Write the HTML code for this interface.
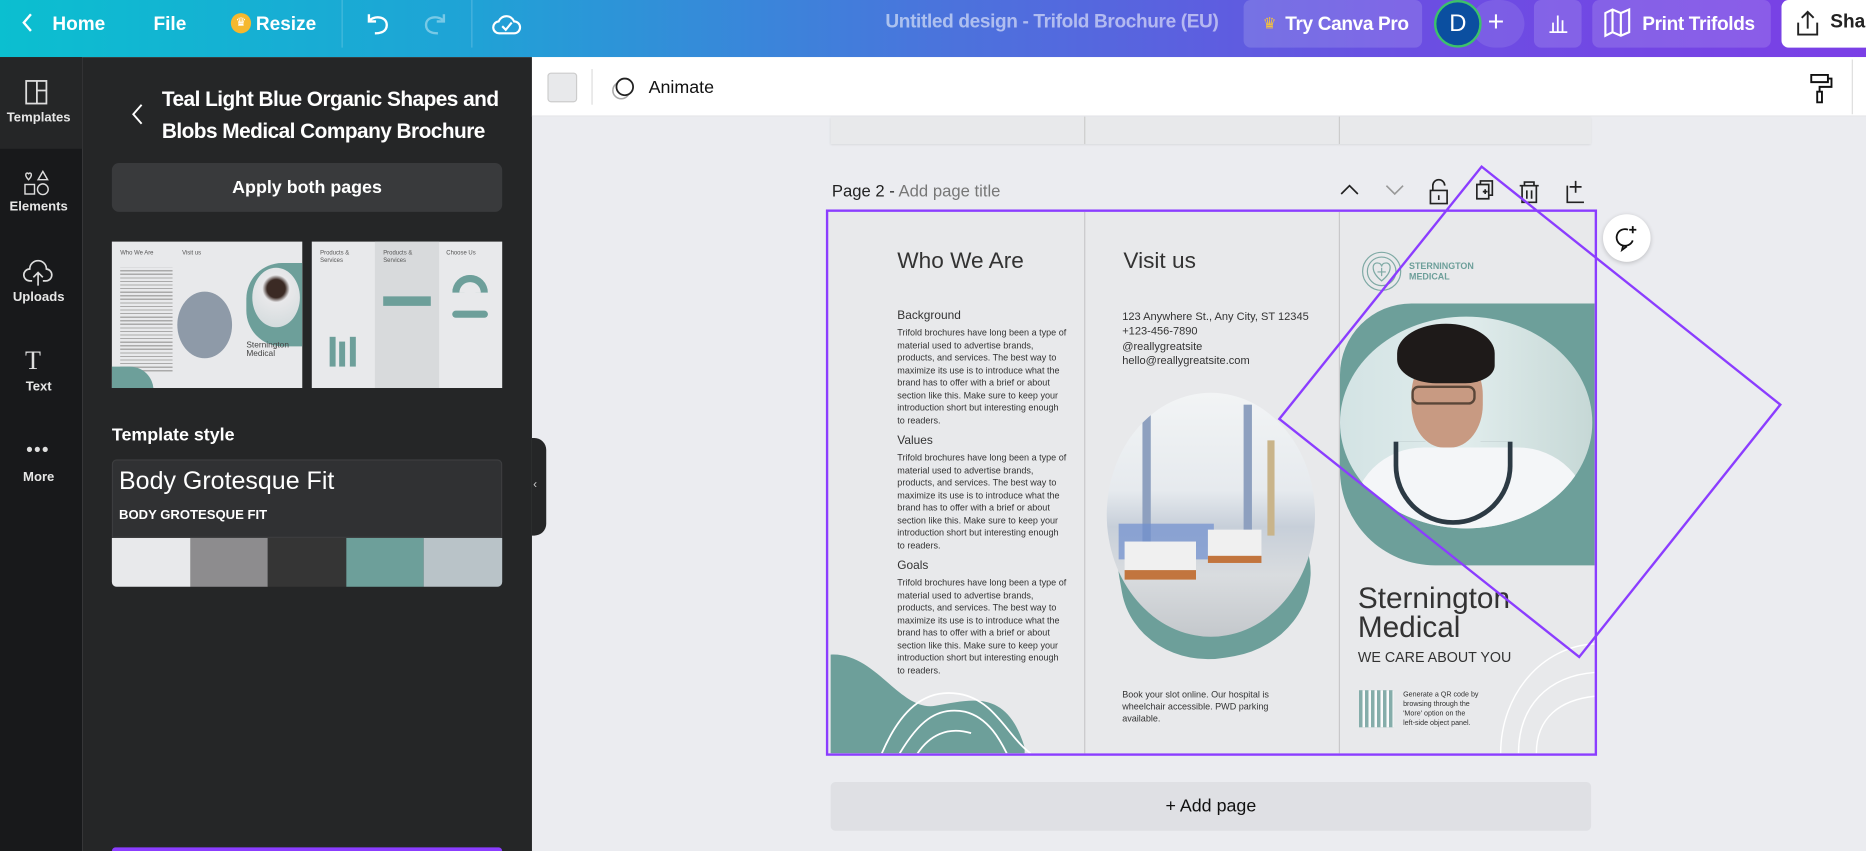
<!DOCTYPE html>
<html><head><meta charset="utf-8"><style>
*{margin:0;padding:0;box-sizing:border-box}
html,body{width:1866px;height:851px;overflow:hidden;background:#ebecf0;font-family:"Liberation Sans",sans-serif}
#w{position:absolute;left:0;top:0;width:1568px;height:715px;transform:scale(1.19005,1.1902);transform-origin:0 0;overflow:hidden;background:#ebecf0}
.a{position:absolute}
.top{left:0;top:0;width:1568px;height:48px;background:linear-gradient(90deg,#0bbfd0 0%,#1fa3d6 25%,#4a74dc 50%,#6a4fe2 75%,#7b3fe6 100%)}
.tt{color:#fff;font-size:16px;font-weight:bold;top:12px}
.pill{background:rgba(255,255,255,.14);border-radius:6px;height:40px;top:0}
.rail{left:0;top:48px;width:69px;height:667px;background:#18191b}
.ri{color:#e6e6e6;font-size:11px;font-weight:bold;width:69px;text-align:center}
.panel{left:69px;top:48px;width:378px;height:667px;background:#252627}
.body{font-size:7.6px;line-height:10.5px;color:#333;font-family:"Liberation Sans",sans-serif}
.h{font-size:10px;color:#333}
</style></head><body><div id="w">
<div class="a top"></div>
<svg class="a" style="left:16px;top:10px" width="14" height="18"><path d="M10 2 L4 9 L10 16" stroke="#fff" stroke-width="2" fill="none"/></svg>
<div class="a tt" style="left:44px">Home</div>
<div class="a tt" style="left:129px">File</div>
<div class="a" style="left:194px;top:11px;width:17px;height:17px;border-radius:50%;background:#f5b82e;color:#fff;font-size:10px;text-align:center;line-height:17px">♛</div>
<div class="a tt" style="left:215px">Resize</div>
<div class="a" style="left:287px;top:0;width:1px;height:40px;background:rgba(255,255,255,.2)"></div>
<svg class="a" style="left:305px;top:8px" width="24" height="24"><path d="M5 4 V10 H11 M5 10 C8 5 20 5 20 13 C20 19 14 20 10 20" stroke="#fff" stroke-width="2" fill="none"/></svg>
<svg class="a" style="left:354px;top:8px" width="24" height="24" opacity=".4"><path d="M19 4 V10 H13 M19 10 C16 5 4 5 4 13 C4 19 10 20 14 20" stroke="#fff" stroke-width="2" fill="none"/></svg>
<div class="a" style="left:396px;top:0;width:1px;height:40px;background:rgba(255,255,255,.2)"></div>
<svg class="a" style="left:412px;top:6px" width="28" height="28"><path d="M8 22 H20 A5 5 0 0 0 20 12 A7 7 0 0 0 7 12 A5 5 0 0 0 8 22 Z M10 16 L13 19 L18 13" stroke="#fff" stroke-width="1.8" fill="none"/></svg>
<div class="a" style="left:744px;top:10px;font-size:16px;font-weight:bold;color:rgba(255,255,255,.55);letter-spacing:-0.3px">Untitled design - Trifold Brochure (EU)</div>
<div class="a pill" style="left:1045px;width:150px"></div>
<div class="a" style="left:1061px;top:12px;color:#f5c33b;font-size:13px">♛</div>
<div class="a tt" style="left:1080px;letter-spacing:-0.3px">Try Canva Pro</div>
<div class="a" style="left:1236px;top:0;width:45px;height:40px;border-radius:20px;background:rgba(255,255,255,.1)"></div>
<div class="a" style="left:1205px;top:0;width:40px;height:40px;border-radius:50%;background:#0b4fa0;border:2px solid #3cc26a;color:#fff;font-size:20px;text-align:center;line-height:36px">D</div>
<div class="a" style="left:1250px;top:5px;color:#fff;font-size:24px">+</div>
<div class="a pill" style="left:1289px;width:40px"></div>
<svg class="a" style="left:1297px;top:7px" width="24" height="24"><path d="M5 20 H20 M8 20 V12 M12 20 V6 M16 20 V10" stroke="#fff" stroke-width="1.5" fill="none"/></svg>
<div class="a pill" style="left:1338px;width:150px"></div>
<svg class="a" style="left:1346px;top:5px" width="26" height="28"><path d="M3 6 L9 3 L16 6 L23 3 V22 L16 25 L9 22 L3 25 Z M9 3 V22 M16 6 V25" stroke="#fff" stroke-width="1.8" fill="none"/></svg>
<div class="a tt" style="left:1380px;letter-spacing:-0.3px">Print Trifolds</div>
<div class="a" style="left:1497px;top:0;width:80px;height:40px;background:#fff;border-radius:6px"></div>
<svg class="a" style="left:1507px;top:7px" width="24" height="26"><path d="M4 12 V22 H20 V12 M12 17 V3 M7 8 L12 3 L17 8" stroke="#222" stroke-width="1.6" fill="none"/></svg>
<div class="a" style="left:1538px;top:10px;font-size:16px;font-weight:bold;color:#222">Sha</div>

<div class="a rail"></div>
<div class="a" style="left:0;top:48px;width:69px;height:77px;background:#252627"></div>
<svg class="a" style="left:21px;top:67px" width="20" height="22"><rect x="1" y="1" width="17" height="19" fill="none" stroke="#ddd" stroke-width="1.5"/><path d="M10 1 V20 M10 9 H18" stroke="#ddd" stroke-width="1.5"/></svg>
<div class="a ri" style="left:-2px;top:93px">Templates</div>
<svg class="a" style="left:20px;top:142px" width="24" height="24"><path d="M4 4 C2 2 0 5 4 9 C8 5 6 2 4 4Z M16 2 L20 9 H12 Z" stroke="#ddd" stroke-width="1.2" fill="none"/><rect x="1" y="13" width="8" height="8" fill="none" stroke="#ddd" stroke-width="1.2"/><circle cx="16" cy="17" r="4.5" fill="none" stroke="#ddd" stroke-width="1.2"/></svg>
<div class="a ri" style="left:-2px;top:168px">Elements</div>
<svg class="a" style="left:19px;top:218px" width="26" height="24"><path d="M8 18 H6 A5 5 0 0 1 6 8 A7 7 0 0 1 20 8 A5 5 0 0 1 19 18 H17 M13 22 V11 M9 15 L13 11 L17 15" stroke="#ddd" stroke-width="1.4" fill="none"/></svg>
<div class="a ri" style="left:-2px;top:244px">Uploads</div>
<div class="a" style="left:21px;top:290px;color:#ddd;font-size:22px;font-family:'Liberation Serif',serif">T</div>
<div class="a ri" style="left:-2px;top:319px">Text</div>
<div class="a" style="left:22px;top:370px;color:#ddd;font-size:16px;letter-spacing:1px">•••</div>
<div class="a ri" style="left:-2px;top:395px">More</div>

<div class="a panel"></div>
<svg class="a" style="left:108px;top:86px" width="14" height="20"><path d="M11 2 L4 10 L11 18" stroke="#fff" stroke-width="1.6" fill="none"/></svg>
<div class="a" style="left:136px;top:70px;color:#fff;font-size:17.5px;font-weight:bold;line-height:27px;letter-spacing:-0.45px">Teal Light Blue Organic Shapes and<br>Blobs Medical Company Brochure</div>
<div class="a" style="left:94px;top:137px;width:328px;height:41px;background:#393a3c;border-radius:6px;color:#fff;font-size:15px;font-weight:bold;text-align:center;line-height:41px">Apply both pages</div>
<div class="a" style="left:94px;top:203px;width:160px;height:123px;background:#e8e9eb;overflow:hidden">
 <div class="a" style="left:7px;top:7px;font-size:5px;color:#555">Who We Are</div><div class="a" style="left:59px;top:7px;font-size:5px;color:#555">Visit us</div>
 <div class="a" style="left:7px;top:22px;width:44px;height:88px;background:repeating-linear-gradient(#e8e9eb 0 2px,#aaa 2px 3px)"></div>
 <div class="a" style="left:113px;top:18px;width:47px;height:70px;background:#6d9f9a;border-radius:30px 0 0 30px"></div>
 <div class="a" style="left:118px;top:22px;width:40px;height:50px;border-radius:50%;background:radial-gradient(circle at 50% 35%,#3b2a24 0 20%,#e8e8ea 30%,#cfd8da)"></div>
 <div class="a" style="left:55px;top:42px;width:46px;height:56px;border-radius:50%;background:#8e9aa8"></div>
 <div class="a" style="left:113px;top:84px;font-size:7px;color:#444;line-height:7px">Sternington<br>Medical</div>
 <div class="a" style="left:0;top:105px;width:35px;height:20px;background:#6d9f9a;border-radius:0 20px 0 0"></div>
</div>
<div class="a" style="left:262px;top:203px;width:160px;height:123px;background:#e8e9eb;overflow:hidden">
 <div class="a" style="left:53px;top:0;width:54px;height:123px;background:#d8dadc"></div>
 <div class="a" style="left:7px;top:7px;font-size:5px;color:#555">Products &amp;<br>Services</div><div class="a" style="left:60px;top:7px;font-size:5px;color:#555">Products &amp;<br>Services</div><div class="a" style="left:113px;top:7px;font-size:5px;color:#555">Choose Us</div>
 <div class="a" style="left:60px;top:46px;width:40px;height:8px;background:#6d9f9a"></div>
 <div class="a" style="left:15px;top:80px;width:5px;height:25px;background:#6d9f9a"></div><div class="a" style="left:23px;top:84px;width:5px;height:21px;background:#6d9f9a"></div><div class="a" style="left:32px;top:80px;width:5px;height:25px;background:#6d9f9a"></div>
 <div class="a" style="left:118px;top:28px;width:30px;height:15px;border:6px solid #6d9f9a;border-bottom:none;border-radius:15px 15px 0 0"></div>
 <div class="a" style="left:118px;top:58px;width:30px;height:6px;background:#6d9f9a;border-radius:3px"></div>
</div>
<div class="a" style="left:94px;top:357px;color:#fff;font-size:15px;font-weight:bold">Template style</div>
<div class="a" style="left:94px;top:386px;width:328px;height:66px;background:#303133;border:1px solid #3c3d3f;border-radius:4px 4px 0 0"></div>
<div class="a" style="left:100px;top:393px;color:#fff;font-size:21px">Body Grotesque Fit</div>
<div class="a" style="left:100px;top:427px;color:#fff;font-size:11px;font-weight:bold">BODY GROTESQUE FIT</div>
<div class="a" style="left:94px;top:452px;width:66px;height:41px;background:#e8e9eb;border-radius:0 0 0 4px"></div>
<div class="a" style="left:160px;top:452px;width:65px;height:41px;background:#8d8c8e"></div>
<div class="a" style="left:225px;top:452px;width:66px;height:41px;background:#353535"></div>
<div class="a" style="left:291px;top:452px;width:65px;height:41px;background:#6d9f9a"></div>
<div class="a" style="left:356px;top:452px;width:66px;height:41px;background:#b9c3c8;border-radius:0 0 4px 0"></div>
<div class="a" style="left:94px;top:712px;width:328px;height:6px;background:#8b3dff;border-radius:4px"></div>
<div class="a" style="left:447px;top:368px;width:12px;height:82px;background:#252627;border-radius:0 10px 10px 0"></div>
<div class="a" style="left:448px;top:402px;color:#ccc;font-size:10px">‹</div>

<div class="a" style="left:447px;top:48px;width:1121px;height:50px;background:#fff;border-bottom:1px solid #e3e4e8"></div>
<div class="a" style="left:460px;top:61px;width:25px;height:25px;background:#e8e9eb;border:1px solid #ccc;border-radius:3px"></div>
<div class="a" style="left:497px;top:58px;width:1px;height:30px;background:#ddd"></div>
<svg class="a" style="left:512px;top:62px" width="24" height="24"><circle cx="10" cy="14" r="7" fill="none" stroke="#aaa" stroke-width="1.3"/><circle cx="13" cy="11" r="7" fill="#fff" stroke="#222" stroke-width="1.5"/></svg>
<div class="a" style="left:545px;top:65px;font-size:15px;color:#111">Animate</div>
<svg class="a" style="left:1518px;top:60px" width="24" height="28"><path d="M4 3 H18 V9 H4 Z M18 6 H21 V13 H11 V17 M9 17 H13 V26 H9 Z" stroke="#111" stroke-width="1.6" fill="none"/></svg>
<div class="a" style="left:1556px;top:50px;width:1px;height:46px;background:#ddd"></div>

<div class="a" style="left:698px;top:98px;width:639px;height:23px;background:#e8e9eb;box-shadow:0 1px 2px rgba(0,0,0,.1)"></div>
<div class="a" style="left:911px;top:98px;width:1px;height:23px;background:#ccc"></div>
<div class="a" style="left:1125px;top:98px;width:1px;height:23px;background:#ccc"></div>

<div class="a" style="left:699px;top:152px;font-size:14px;color:#222">Page 2 - <span style="color:#777">Add page title</span></div>
<svg class="a" style="left:1124px;top:150px" width="220" height="22" fill="none" stroke-width="1.4">
<path d="M3 13 L10 6 L17 13" stroke="#222"/><path d="M41 6 L48 13 L55 6" stroke="#999"/>
<path d="M80 10 V6 A5 5 0 0 1 90 6 M78 10 H92 V21 H78 Z M85 14 V18" stroke="#222"/>
<path d="M117 5 H127 V17 H117 Z M120 5 V2 H130 V14 H127 M122 11 H126 M124 9 V13" stroke="#222"/>
<path d="M153 6 H169 M157 6 V3 H165 V6 M155 6 V20 H167 V6 M159 10 V17 M163 10 V17" stroke="#222"/>
<path d="M193 6 V20 H207 M200 2 V12 M195 7 H205" stroke="#222"/>
</svg>

<div class="a" style="left:696px;top:178px;width:644px;height:455px;background:#e8e9eb;overflow:hidden">
 <div class="a" style="left:215px;top:0;width:1px;height:455px;background:#c8c8ca"></div>
 <div class="a" style="left:429px;top:0;width:1px;height:455px;background:#c8c8ca"></div>
 <div class="a" style="left:58px;top:31px;font-size:19px;color:#333">Who We Are</div>
 <div class="a h" style="left:58px;top:82px">Background</div>
 <div class="a body" style="left:58px;top:97px">Trifold brochures have long been a type of<br>material used to advertise brands,<br>products, and services. The best way to<br>maximize its use is to introduce what the<br>brand has to offer with a brief or about<br>section like this. Make sure to keep your<br>introduction short but interesting enough<br>to readers.</div>
 <div class="a h" style="left:58px;top:187px">Values</div>
 <div class="a body" style="left:58px;top:202px">Trifold brochures have long been a type of<br>material used to advertise brands,<br>products, and services. The best way to<br>maximize its use is to introduce what the<br>brand has to offer with a brief or about<br>section like this. Make sure to keep your<br>introduction short but interesting enough<br>to readers.</div>
 <div class="a h" style="left:58px;top:292px">Goals</div>
 <div class="a body" style="left:58px;top:307px">Trifold brochures have long been a type of<br>material used to advertise brands,<br>products, and services. The best way to<br>maximize its use is to introduce what the<br>brand has to offer with a brief or about<br>section like this. Make sure to keep your<br>introduction short but interesting enough<br>to readers.</div>
 <svg class="a" style="left:0;top:360px" width="215" height="95"><path d="M2 12 C40 10 60 60 90 55 C120 50 150 40 165 90 L165 95 H2 Z" fill="#6d9f9a"/><path d="M45 95 C60 60 80 40 110 45 C140 50 150 80 170 95 M60 95 C75 70 90 55 115 60 C135 65 145 85 150 95 M75 95 C85 80 100 72 120 78" stroke="#fff" stroke-width="1.5" fill="none"/></svg>
 <div class="a" style="left:248px;top:31px;font-size:19px;color:#333">Visit us</div>
 <div class="a" style="left:247px;top:82px;font-size:9.3px;line-height:12.3px;color:#333">123 Anywhere St., Any City, ST 12345<br>+123-456-7890<br>@reallygreatsite<br>hello@reallygreatsite.com</div>
 <div class="a" style="left:245px;top:230px;width:160px;height:145px;border-radius:45% 55% 50% 50%;background:#6d9f9a;transform:rotate(-10deg)"></div>
 <div class="a" style="left:234px;top:152px;width:175px;height:205px;border-radius:50%;overflow:hidden;background:linear-gradient(180deg,#f2f4f5 0%,#e6eaee 40%,#c7cfd9 55%,#d9dcdf 75%,#c4c8cc 100%)">
  <div class="a" style="left:30px;top:5px;width:7px;height:130px;background:#8ea0bf"></div>
  <div class="a" style="left:115px;top:10px;width:7px;height:120px;background:#8ea0bf"></div>
  <div class="a" style="left:135px;top:40px;width:6px;height:80px;background:#c9b48a"></div>
  <div class="a" style="left:10px;top:110px;width:80px;height:30px;background:#6f8fcf;opacity:.7"></div>
  <div class="a" style="left:15px;top:125px;width:60px;height:32px;background:#f0f0f0;border-bottom:8px solid #c2753e"></div>
  <div class="a" style="left:85px;top:115px;width:45px;height:28px;background:#f0f0f0;border-bottom:6px solid #c2753e"></div>
 </div>
 <div class="a body" style="left:247px;top:401px;line-height:10px">Book your slot online. Our hospital is<br>wheelchair accessible. PWD parking<br>available.</div>
 <svg class="a" style="left:445px;top:30px" width="40" height="40"><circle cx="20" cy="20" r="16" fill="none" stroke="#7ea9a4" stroke-width="1"/><circle cx="20" cy="20" r="12" fill="none" stroke="#7ea9a4" stroke-width="1"/><path d="M20 28 C10 20 12 12 17 13 C19 13 20 15 20 16 C20 15 21 13 23 13 C28 12 30 20 20 28Z M20 17 V24 M16.5 20.5 H23.5" stroke="#7ea9a4" fill="none"/></svg>
 <div class="a" style="left:488px;top:41px;font-size:7.5px;font-weight:bold;color:#6d9f9a;line-height:9px">STERNINGTON<br>MEDICAL</div>
 <div class="a" style="left:430px;top:77px;width:214px;height:220px;background:#6d9f9a;border-radius:60px 0 0 80px"></div>
 <div class="a" style="left:430px;top:88px;width:212px;height:178px;border-radius:50%;overflow:hidden;background:linear-gradient(90deg,#d3e3e4 0%,#e0ecec 50%,#c6d8d6 100%)">
  <div class="a" style="left:10px;top:110px;width:200px;height:80px;background:#f4f6f8;border-radius:60px 60px 0 0"></div>
  <div class="a" style="left:60px;top:30px;width:60px;height:80px;border-radius:45%;background:#c89a82"></div>
  <div class="a" style="left:48px;top:6px;width:82px;height:50px;border-radius:50% 50% 30% 40%;background:#1e1a19"></div>
  <div class="a" style="left:60px;top:58px;width:54px;height:16px;border:2px solid #5a4638;border-radius:6px"></div>
  <div class="a" style="left:45px;top:105px;width:100px;height:70px;border:4px solid #2c3a44;border-top:none;border-radius:0 0 50px 50px"></div>
 </div>
 <div class="a" style="left:445px;top:313px;font-size:25px;color:#333;line-height:24px">Sternington<br>Medical</div>
 <div class="a" style="left:445px;top:367px;font-size:12px;color:#333">WE CARE ABOUT YOU</div>
 <div class="a" style="left:446px;top:402px;width:29px;height:31px;background:repeating-linear-gradient(90deg,#6d9f9a 0 3px,#fff 3px 5px),#6d9f9a;opacity:.8"></div>
 <div class="a" style="left:483px;top:402px;font-size:6px;line-height:8px;color:#333">Generate a QR code by<br>browsing through the<br>'More' option on the<br>left-side object panel.</div>
 <svg class="a" style="left:560px;top:355px" width="84" height="100"><path d="M5 100 C5 50 40 10 84 8 M20 100 C20 60 45 35 84 32 M35 100 C35 70 55 55 84 52" stroke="#fff" stroke-width="1.2" fill="none"/></svg>
</div>
<div class="a" style="left:694px;top:176px;width:648px;height:459px;border:2px solid #8b3dff"></div>
<svg class="a" style="left:0;top:0" width="1568" height="715"><path d="M1245 140 L1496 340 L1327 552 L1075 352 Z" fill="none" stroke="#8b3dff" stroke-width="2"/></svg>
<div class="a" style="left:1347px;top:180px;width:40px;height:40px;border-radius:50%;background:#fff;box-shadow:0 1px 4px rgba(0,0,0,.2)"></div>
<svg class="a" style="left:1355px;top:188px" width="24" height="24"><path d="M13 5 A7 7 0 1 0 17 14 M9 18 L8 22 L12 19 M17 2 V8 M14 5 H20" stroke="#111" stroke-width="1.5" fill="none"/></svg>

<div class="a" style="left:698px;top:657px;width:639px;height:41px;background:#dfe0e4;border-radius:4px;text-align:center;line-height:41px;font-size:15px;color:#111">+ Add page</div>
</div></body></html>
